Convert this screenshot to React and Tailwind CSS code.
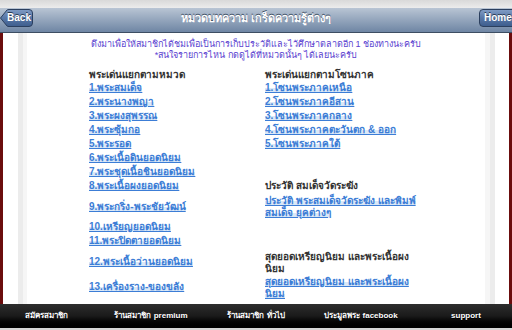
import React from 'react';

const leftLinks = [
  { t: '1.พระสมเด็จ', mt: 'mt-[1px]' },
  { t: '2.พระนางพญา', mt: 'mt-[2px]' },
  { t: '3.พระผงสุพรรณ', mt: 'mt-[2px]' },
  { t: '4.พระซุ้มกอ', mt: 'mt-[2px]' },
  { t: '5.พระรอด', mt: 'mt-[2px]' },
  { t: '6.พระเนื้อดินยอดนิยม', mt: 'mt-[2px]' },
  { t: '7.พระชุดเนื้อชินยอดนิยม', mt: 'mt-[2px]' },
  { t: '8.พระเนื้อผงยอดนิยม', mt: 'mt-[2px]' },
  { t: '9.พระกริ่ง-พระชัยวัฒน์', mt: 'mt-[9px]' },
  { t: '10.เหรียญยอดนิยม', mt: 'mt-[8px]' },
  { t: '11.พระปิดตายอดนิยม', mt: 'mt-[2px]' },
  { t: '12.พระเนื้อว่านยอดนิยม', mt: 'mt-[9px]' },
  { t: '13.เครื่องราง-ของขลัง', mt: 'mt-[13px]' },
];

const regionLinks = [
  '1.โซนพระภาคเหนือ',
  '2.โซนพระภาคอีสาน',
  '3.โซนพระภาคกลาง',
  '4.โซนพระภาคตะวันตก & ออก',
  '5.โซนพระภาคใต้',
];

const footerItems = ['สมัครสมาชิก', 'ร้านสมาชิก premium', 'ร้านสมาชิก ทั่วไป', 'ประมูลพระ facebook', 'support'];

const linkCls =
  'font-bold text-[#3c7dd6] underline decoration-[#3c7dd6] underline-offset-[1px] shadow-[inset_0_-5px_0_#dae8f7]';

function Link({ children }) {
  return <a href="#" className={linkCls}>{children}</a>;
}

export default function App() {
  return (
    <div
      className="w-[512px] h-[330px] overflow-hidden flex flex-col bg-[#e4e4e4]"
      style={{ fontFamily: '"Liberation Sans", "Noto Sans", "DejaVu Sans", sans-serif' }}
    >
      <div className="h-[8px] bg-gradient-to-b from-[#d9d9d9] to-[#ececec]" />

      {/* Header bar */}
      <header className="h-[25px] flex items-start bg-gradient-to-b from-[#b9c5d4] to-[#6f86a4] border-b border-[#3d4e63]">
        <button className="relative w-[33px] h-[18px] mt-[1px] shrink-0">
          <svg className="absolute inset-0" width="33" height="18" viewBox="0 0 33 18">
            <defs>
              <linearGradient id="bk" x1="0" y1="0" x2="0" y2="1">
                <stop offset="0" stopColor="#7f9bc4" />
                <stop offset="0.5" stopColor="#5877a6" />
                <stop offset="1" stopColor="#3e5e8e" />
              </linearGradient>
            </defs>
            <path d="M0.5 9 L7 1 Q7.6 0.5 9 0.5 H29 Q32.5 0.5 32.5 4 V14 Q32.5 17.5 29 17.5 H9 Q7.6 17.5 7 17 Z" fill="url(#bk)" stroke="#2b3f5e" />
          </svg>
          <span className="relative block pl-[5px] text-[10px] leading-[18px] font-bold text-white [text-shadow:0_-1px_0_#2b3a52]">Back</span>
        </button>
        <div className="flex-1 text-center text-[11px] leading-[20px] font-bold text-white [text-shadow:0_-1px_0_#3a4a60]">
          หมวดบทความ เกร็ดความรู้ต่างๆ
        </div>
        <button className="w-[40px] h-[18px] mt-[1px] -mr-[7px] shrink-0 rounded-[4px] border border-[#2b3f5e] bg-gradient-to-b from-[#7f9bc4] via-[#5877a6] to-[#3e5e8e] text-left pl-[4px] text-[10px] leading-[16px] font-bold text-white [text-shadow:0_-1px_0_#2b3a52]">
          Home
        </button>
      </header>

      {/* Body */}
      <div className="flex-1 flex bg-white min-h-0">
        <div className="w-[3px] bg-[#6b0d0d]" />
        <div className="w-[15px]" />
        <div className="w-[5px] bg-[#ececec]" />
        <div className="w-[4px] bg-[#f6f6f6]" />

        <main className="flex-1 pt-[6px] overflow-hidden">
          <div className="text-center text-[9px] leading-[11px] text-[#5a3fd0]">
            <p>ดึงมาเพื่อให้สมาชิกได้ชมเพื่อเป็นการเก็บประวัติและไว้ศึกษาตลาดอีก 1 ช่องทางนะครับ</p>
            <p>*สนใจรายการไหน กดดูได้ที่หมวดนั้นๆ ได้เลยนะครับ</p>
          </div>

          <div className="flex mt-[8px] pl-[62px] text-[10px] leading-[12px]">
            <div className="w-[176px] flex flex-col items-start">
              <h3 className="font-bold text-[#333333]">พระเด่นแยกตามหมวด</h3>
              {leftLinks.map((l) => (
                <div key={l.t} className={l.mt}>
                  <Link>{l.t}</Link>
                </div>
              ))}
            </div>

            <div className="w-[156px] flex flex-col items-start">
              <h3 className="font-bold text-[#333333]">พระเด่นแยกตามโซนภาค</h3>
              {regionLinks.map((t, i) => (
                <div key={t} className={i === 0 ? 'mt-[1px]' : 'mt-[2px]'}>
                  <Link>{t}</Link>
                </div>
              ))}

              <h3 className="mt-[30px] font-bold text-[#333333]">ประวัติ สมเด็จวัดระฆัง</h3>
              <div className="mt-[3px]">
                <Link>ประวัติ พระสมเด็จวัดระฆัง และพิมพ์สมเด็จ ยุคต่างๆ</Link>
              </div>

              <h3 className="mt-[32px] font-bold text-[#333333]">สุดยอดเหรียญนิยม และพระเนื้อผงนิยม</h3>
              <div className="mt-[1px]">
                <Link>สุดยอดเหรียญนิยม และพระเนื้อผงนิยม</Link>
              </div>
            </div>
          </div>
        </main>

        <div className="w-[5px] bg-[#f6f6f6]" />
        <div className="w-[5px] bg-[#ececec]" />
        <div className="w-[14px]" />
        <div className="w-[3px] bg-[#6b0d0d]" />
      </div>

      {/* Footer */}
      <footer className="h-[24px] shrink-0 flex justify-center bg-gradient-to-b from-[#2e2e2e] via-[#1a1a1a] to-black">
        {footerItems.map((f) => (
          <a
            key={f}
            href="#"
            className="w-[105px] shrink-0 text-center text-[8px] leading-[24px] font-bold text-white [text-shadow:0_1px_0_#000]"
          >
            {f}
          </a>
        ))}
      </footer>
      <div className="h-[2px] bg-[#d6d6d6]" />
    </div>
  );
}
